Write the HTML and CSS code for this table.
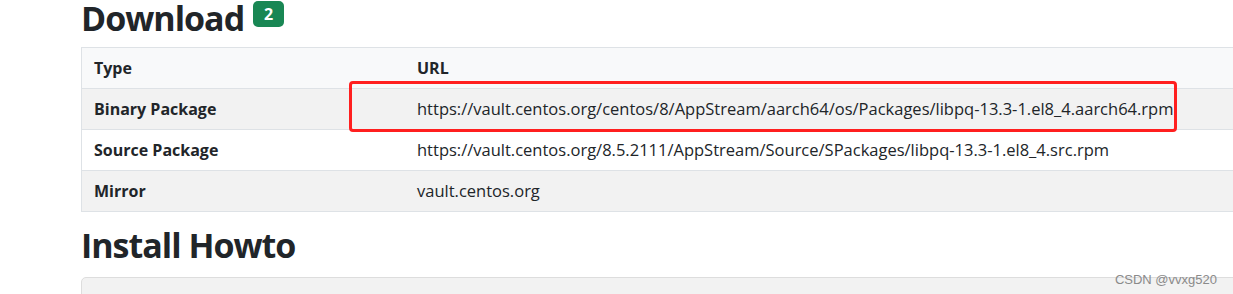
FILE: index.html
```html
<!DOCTYPE html>
<html lang="en">
<head>
<meta charset="utf-8">
<title>libpq download</title>
<link rel="stylesheet" href="styles.css">
</head>
<body>
<main class="page">
  <h2 class="heading">Download <span class="badge">2</span></h2>
  <div class="table-wrap">
    <table class="table">
      <thead>
        <tr><th class="col-type">Type</th><th>URL</th></tr>
      </thead>
      <tbody>
        <tr class="striped"><th>Binary Package</th><td>https://vault.centos.org/centos/8/AppStream/aarch64/os/Packages/libpq-13.3-1.el8_4.aarch64.rpm</td></tr>
        <tr><th>Source Package</th><td>https://vault.centos.org/8.5.2111/AppStream/Source/SPackages/libpq-13.3-1.el8_4.src.rpm</td></tr>
        <tr class="striped"><th>Mirror</th><td>vault.centos.org</td></tr>
      </tbody>
    </table>
    <div class="highlight"></div>
  </div>
  <h2 class="heading heading-install">Install Howto</h2>
  <div class="howto"></div>
</main>
<div class="watermark">CSDN @vvxg520</div>
</body>
</html>
```

FILE: styles.css
```css
html, body {
  margin: 0;
  padding: 0;
  background: #fff;
  overflow: hidden;
  height: 294px;
}
body {
  font-family: "Open Sans", "Noto Sans", "Liberation Sans", sans-serif;
  color: #212529;
  font-size: 16px;
  line-height: 1.5;
}
.page {
  padding-left: 81px;
  width: 1300px;
}
.heading {
  font-size: 34px;
  font-weight: 700;
  line-height: 36px;
  letter-spacing: -1px;
  margin: 0 0 11px 0;
  display: flex;
  align-items: flex-start;
  gap: 9px;
}
.badge {
  display: inline-flex;
  align-items: center;
  justify-content: center;
  background: #198754;
  color: #fff;
  font-size: 16px;
  font-weight: 700;
  letter-spacing: 0;
  width: 31px;
  height: 26px;
  border-radius: 5px;
  margin-top: 1px;
  line-height: 1;
}
.table-wrap {
  position: relative;
}
.table {
  border-collapse: collapse;
  width: 1250px;
  border-left: 1px solid #dee2e6;
}
.table th, .table td {
  text-align: left;
  padding: 8px 12px;
  line-height: 24px;
  border-top: 1px solid #dee2e6;
  border-bottom: 1px solid #dee2e6;
  vertical-align: top;
  white-space: nowrap;
}
.table td {
  font-size: 16.5px;
}
.table thead th {
  background: #f8f9fa;
}
.table .col-type {
  width: 299px;
}
.table tbody th {
  font-weight: 700;
}
.table tr.striped th, .table tr.striped td {
  background: #f2f2f2;
}
.highlight {
  position: absolute;
  left: 268px;
  top: 34px;
  width: 822px;
  height: 45px;
  border: 3px solid #ff1f1f;
  border-radius: 4px;
}
.heading-install {
  margin-top: 15px;
  margin-bottom: 14px;
}
.howto {
  height: 40px;
  background: #f2f2f2;
  border: 1px solid #dddddd;
  border-radius: 5px;
}
.watermark {
  position: absolute;
  right: 16px;
  bottom: 8px;
  font-family: "Liberation Sans", sans-serif;
  font-size: 13px;
  color: #8a8a8a;
  line-height: 1;
}
```
